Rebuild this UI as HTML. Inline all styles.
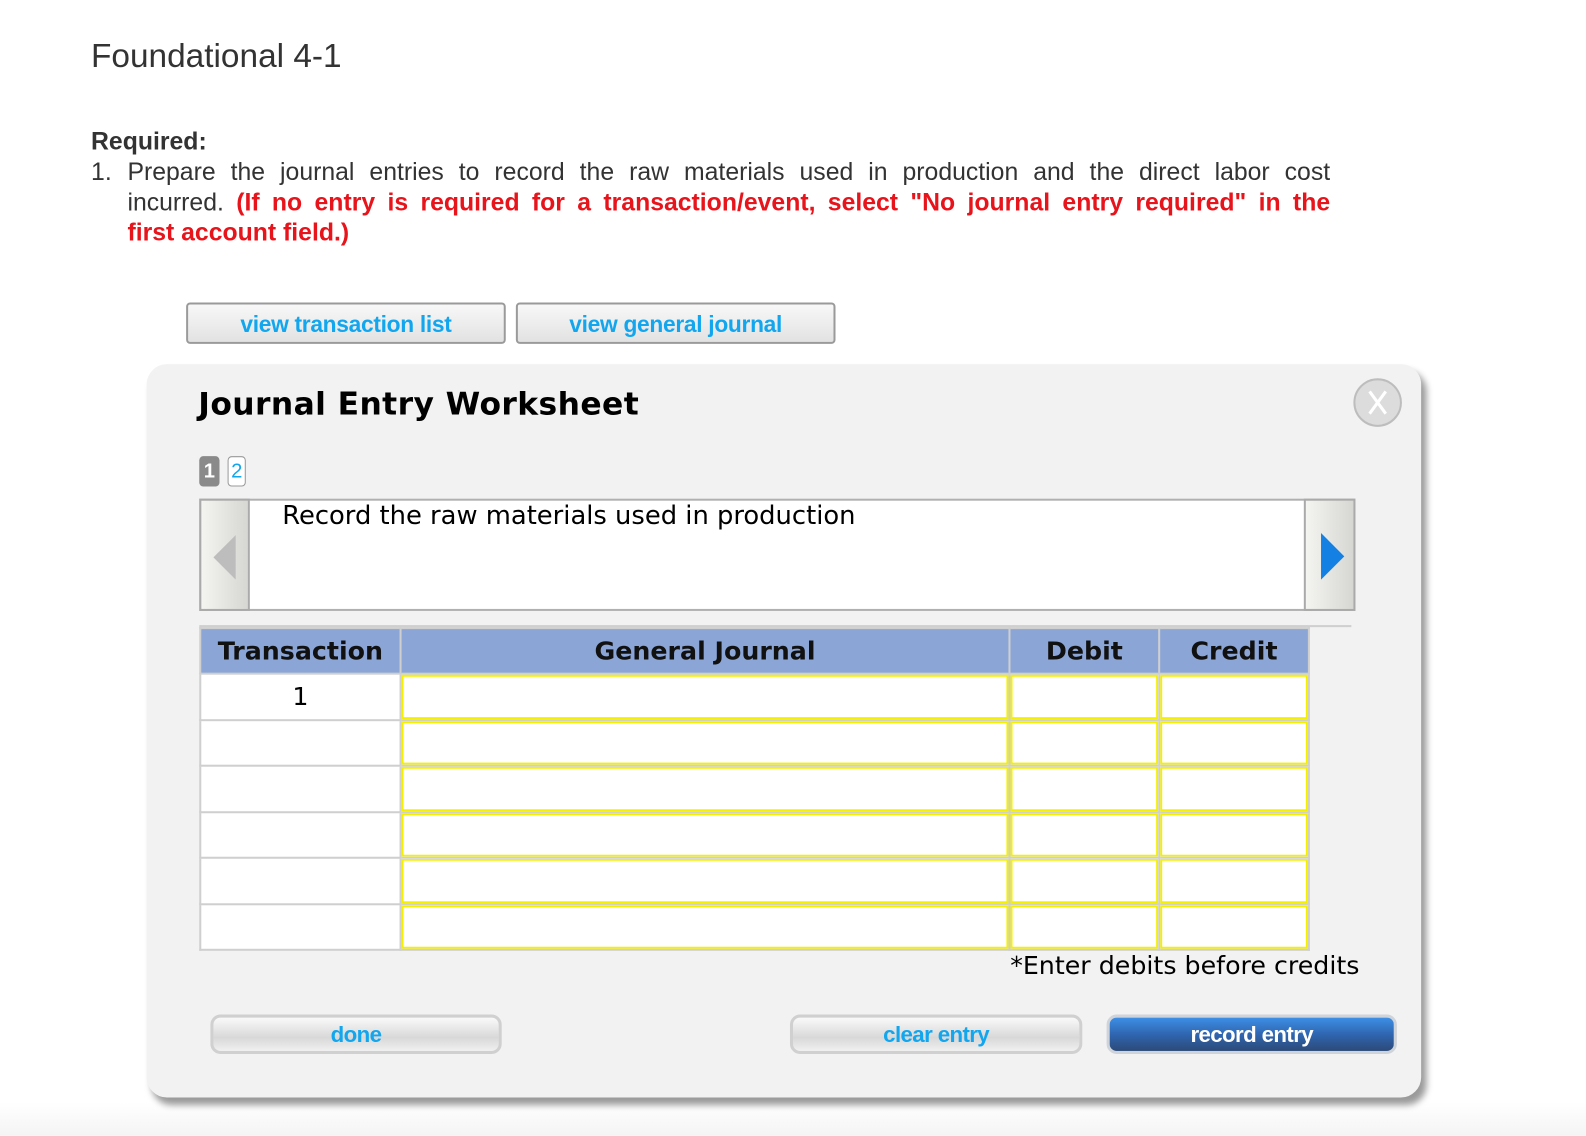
<!DOCTYPE html>
<html><head><meta charset="utf-8"><style>
html,body{margin:0;padding:0;width:1586px;height:1136px;overflow:hidden;background:#fff;}
#w{position:absolute;left:0;top:0;width:1568px;height:1123px;transform:scale(1.0115);transform-origin:0 0;
background:linear-gradient(#fff 0,#fff 1090px,#f4f4f4 1123px);}
.a{position:absolute;}
.h{font-family:"Liberation Sans",Arial,sans-serif;}
.v{font-family:"DejaVu Sans",Verdana,sans-serif;}
.btn{position:absolute;border:2px solid #9a9a9a;border-radius:4px;background:linear-gradient(#f8f8f8,#e2e2e2);
color:#12a6ee;font-family:"Liberation Sans",Arial,sans-serif;font-weight:bold;font-size:22.5px;letter-spacing:-0.3px;text-align:center;box-sizing:border-box;}
.pb{position:absolute;border:3px solid #d0d0d0;border-radius:10px;background:linear-gradient(#fafafa,#d8d8d8 60%,#f0f0f0);
color:#12a6ee;font-family:"Liberation Sans",Arial,sans-serif;font-weight:bold;font-size:22px;letter-spacing:-0.6px;text-align:center;box-sizing:border-box;line-height:33px;}
table{position:absolute;left:197px;top:620px;border-collapse:collapse;}
td,th{border:2px solid #cfcfcf;padding:0;box-sizing:border-box;}
th{background:#8aa5d6;height:45px;font-family:"DejaVu Sans",Verdana,sans-serif;font-weight:bold;font-size:25px;color:#111;}
td{height:45.5px;background:#fff;}
td.y{box-shadow:inset 0 0 0 2px #f5f000;}
.ln{position:absolute;left:126px;width:1189px;font-size:24.5px;color:#333;line-height:30px;white-space:nowrap;}
.j{text-align:justify;text-align-last:justify;white-space:normal;}
</style></head><body><div id="w">
<div class="a h" style="left:90px;top:36px;font-size:33px;color:#333;">Foundational 4-1</div>
<div class="a h" style="left:90px;top:127px;font-size:24.5px;font-weight:bold;color:#333;">Required:</div>
<div class="a h" style="left:90px;top:156px;font-size:24.5px;color:#333;line-height:30px;">1.</div>
<div class="ln h j" style="top:156px;">Prepare the journal entries to record the raw materials used in production and the direct labor cost</div>
<div class="ln h j" style="top:186px;">incurred. <b style="color:#e8141c">(If no entry is required for a transaction/event, select "No journal entry required" in the</b></div>
<div class="ln h" style="top:216px;"><b style="color:#e8141c">first account field.)</b></div>

<div class="btn" style="left:184px;top:299px;width:316px;height:41px;line-height:40px;">view transaction list</div>
<div class="btn" style="left:510px;top:299px;width:316px;height:41px;line-height:40px;">view general journal</div>

<div class="a" style="left:145px;top:360px;width:1260px;height:725px;background:#f2f2f2;border-radius:20px;box-shadow:5px 7px 7px rgba(0,0,0,.4);"></div>
<div class="a v" style="left:196px;top:382px;font-size:31px;font-weight:bold;color:#000;letter-spacing:0.4px;">Journal Entry Worksheet</div>
<div class="a" style="left:1338px;top:374px;width:48px;height:48px;border-radius:50%;border:2px solid #bdbdbd;background:#dcdcdc;box-sizing:border-box;">
<svg width="44" height="44" style="position:absolute;left:0;top:0"><path d="M14 11 L30 33 M30 11 L14 33" stroke="#fff" stroke-width="3"/></svg></div>

<div class="a h" style="left:197px;top:451px;width:20px;height:30px;background:#8a8a8a;border-radius:4px;color:#fff;font-size:20px;font-weight:bold;text-align:center;line-height:30px;">1</div>
<div class="a h" style="left:225px;top:451px;width:18px;height:30px;background:#fff;border:1px solid #999;box-sizing:border-box;border-radius:4px;color:#12a6ee;font-size:20px;text-align:center;line-height:28px;">2</div>

<div class="a" style="left:197px;top:493px;width:1143px;height:111px;background:#fff;border:2px solid #b0b0b0;box-sizing:border-box;"></div>
<div class="a" style="left:197px;top:493px;width:50px;height:111px;background:linear-gradient(90deg,#f4f4f0,#d6d6d2);border:2px solid #aaa;box-sizing:border-box;">
<svg width="46" height="107"><path d="M34 34 L12 56 L34 78Z" fill="#bdbdbd"/></svg></div>
<div class="a" style="left:1289px;top:493px;width:51px;height:111px;background:linear-gradient(90deg,#f4f4f0,#d6d6d2);border:2px solid #aaa;box-sizing:border-box;">
<svg width="47" height="107"><path d="M15 32 L38 55 L15 78Z" fill="#1480e4"/></svg></div>
<div class="a v" style="left:279px;top:495px;font-size:25.5px;color:#000;">Record the raw materials used in production</div>
<div class="a" style="left:197px;top:618px;width:1139px;height:2px;background:#cfcfcf;"></div>

<table>
<tr><th style="width:198px">Transaction</th><th style="width:602px">General Journal</th><th style="width:148px">Debit</th><th style="width:148px">Credit</th></tr>
<tr><td class="v" style="text-align:center;font-size:25px;">1</td><td class="y"></td><td class="y"></td><td class="y"></td></tr>
<tr><td></td><td class="y"></td><td class="y"></td><td class="y"></td></tr>
<tr><td></td><td class="y"></td><td class="y"></td><td class="y"></td></tr>
<tr><td></td><td class="y"></td><td class="y"></td><td class="y"></td></tr>
<tr><td></td><td class="y"></td><td class="y"></td><td class="y"></td></tr>
<tr><td></td><td class="y"></td><td class="y"></td><td class="y"></td></tr>
</table>
<div class="a v" style="right:224px;top:940px;font-size:25px;color:#000;">*Enter debits before credits</div>

<div class="pb" style="left:208px;top:1003px;width:288px;height:39px;">done</div>
<div class="pb" style="left:781px;top:1003px;width:289px;height:39px;">clear entry</div>
<div class="pb" style="left:1094px;top:1003px;width:287px;height:39px;border-color:#cfd3da;background:linear-gradient(#3d8fe6,#2f66b0 50%,#2c4a78);color:#fff;">record entry</div>
</div></body></html>
